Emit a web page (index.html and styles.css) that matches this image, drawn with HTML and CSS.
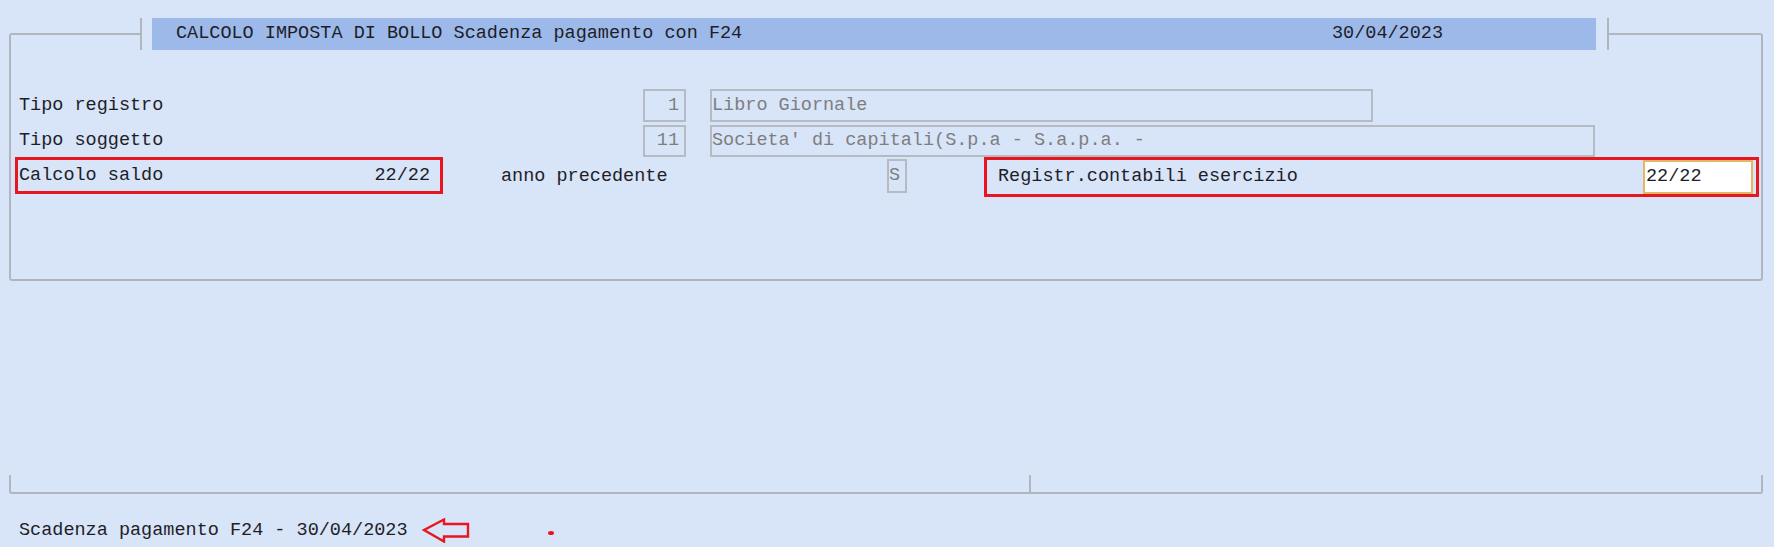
FILE: index.html
```html
<!DOCTYPE html>
<html lang="it">
<head>
<meta charset="utf-8">
<title>Calcolo imposta di bollo</title>
<link rel="stylesheet" href="styles.css">
</head>
<body>
<div class="screen">
  <fieldset class="panel">
    <legend class="panel-head">
      <span class="tick"></span>
      <span class="title-bar">
        <span class="title-text">CALCOLO IMPOSTA DI BOLLO Scadenza pagamento con F24</span>
        <span class="title-date">30/04/2023</span>
      </span>
      <span class="tick"></span>
    </legend>
    <div class="form">
      <div class="row">
        <span class="label">Tipo registro</span>
        <span class="field field-code">1</span>
        <span class="field field-desc field-desc-short">Libro Giornale</span>
      </div>
      <div class="row row-2">
        <span class="label">Tipo soggetto</span>
        <span class="field field-code">11</span>
        <span class="field field-desc field-desc-long">Societa' di capitali(S.p.a - S.a.p.a. -</span>
      </div>
      <div class="row row-3">
        <div class="mark mark-left">
          <span class="mark-label">Calcolo saldo</span>
          <span class="mark-value">22/22</span>
        </div>
        <span class="label-mid">anno precedente</span>
        <span class="field field-flag">S</span>
        <div class="mark mark-right">
          <span class="mark-label">Registr.contabili esercizio</span>
          <span class="input-active">22/22</span>
        </div>
      </div>
    </div>
  </fieldset>

  <div class="bottom-frame">
    <div class="cell cell-left"></div>
    <div class="cell cell-right"></div>
  </div>

  <div class="status">
    <span class="status-text">Scadenza pagamento F24 - 30/04/2023</span>
    <svg class="arrow" width="48" height="25" viewBox="0 0 48 25">
      <polygon points="2,12 22,1.5 22,6 46,6 46,18.5 22,18.5 22,23.5" fill="none" stroke="#e8161e" stroke-width="2.4" stroke-linejoin="miter"/>
    </svg>
    <span class="dot"></span>
  </div>
</div>
</body>
</html>
```

FILE: styles.css
```css
* { box-sizing: border-box; }

html, body {
  margin: 0;
  padding: 0;
  background: #d8e4f7;
}

body {
  font-family: "Liberation Mono", "Courier New", monospace;
  font-size: 18.5px;
  color: #1e1e28;
  width: 1774px;
  height: 547px;
  overflow: hidden;
}

.screen {
  padding: 18px 11px 0 9px;
}

.panel {
  margin: 0;
  padding: 0;
  min-width: 0;
  height: 263px;
  border: 2px solid #b1b5bd;
  border-radius: 3px;
}

.panel-head {
  display: flex;
  align-items: stretch;
  padding: 0;
  margin-left: 129px;
  height: 32px;
}

.tick {
  width: 2px;
  background: #b1b5bd;
}

.title-bar {
  display: flex;
  align-items: center;
  width: 1444px;
  margin: 0 11px 0 10px;
  padding-left: 24px;
  background: #9db9ea;
  line-height: 20px;
}

.title-date {
  margin-left: auto;
  margin-right: 153px;
}

.form {
  padding: 39px 0 0 4px;
  display: flex;
  flex-direction: column;
}

.row {
  display: flex;
  align-items: center;
  height: 33px;
  line-height: 20px;
}

.row-2 {
  margin-top: 3px;
  height: 32px;
}

.label {
  width: 628px;
  padding-left: 4px;
}

.field {
  height: 100%;
  border: 2px solid #b6bac2;
  color: #7e7e7e;
  display: flex;
  align-items: center;
}

.field-code {
  width: 43px;
  justify-content: flex-end;
  padding-right: 5px;
}

.field-desc {
  margin-left: 24px;
  padding-left: 0;
}

.field-desc-short { width: 663px; }
.field-desc-long { width: 885px; }

.row-3 {
  align-items: flex-start;
  height: 40px;
}

.mark {
  display: flex;
  align-items: center;
  border: 3px solid #e8161e;
}

.mark-left {
  width: 428px;
  height: 37px;
  padding: 1px 10px 0 1px;
  justify-content: space-between;
}

.label-mid {
  width: 386px;
  margin-left: 58px;
  margin-top: 10px;
}

.field-flag {
  width: 20px;
  height: 34px;
  margin-top: 2px;
  padding-left: 0;
}

.mark-right {
  width: 775px;
  height: 40px;
  margin-left: 77px;
  padding: 0 3px 0 11px;
}

.mark-right .mark-label {
  flex: 1;
}

.input-active {
  width: 110px;
  height: 34px;
  background: #ffffff;
  border: 2px solid #e2b866;
  padding-left: 1px;
  display: flex;
  align-items: center;
}

.bottom-frame {
  display: flex;
  height: 19px;
  margin-top: 194px;
}

.cell {
  height: 100%;
  border-bottom: 2px solid #b1b5bd;
  border-left: 2px solid #b1b5bd;
}

.cell-left {
  width: 1020px;
  border-bottom-left-radius: 3px;
}

.cell-right {
  flex: 1;
  border-right: 2px solid #b1b5bd;
  border-bottom-right-radius: 3px;
}

.status {
  display: flex;
  align-items: center;
  margin-top: 24px;
  padding-left: 10px;
  height: 25px;
  line-height: 20px;
}

.arrow {
  margin-left: 14px;
  display: block;
}

.dot {
  width: 6px;
  height: 4px;
  border-radius: 50%;
  background: #e8161e;
  margin-left: 78px;
  margin-top: 4px;
}
```
